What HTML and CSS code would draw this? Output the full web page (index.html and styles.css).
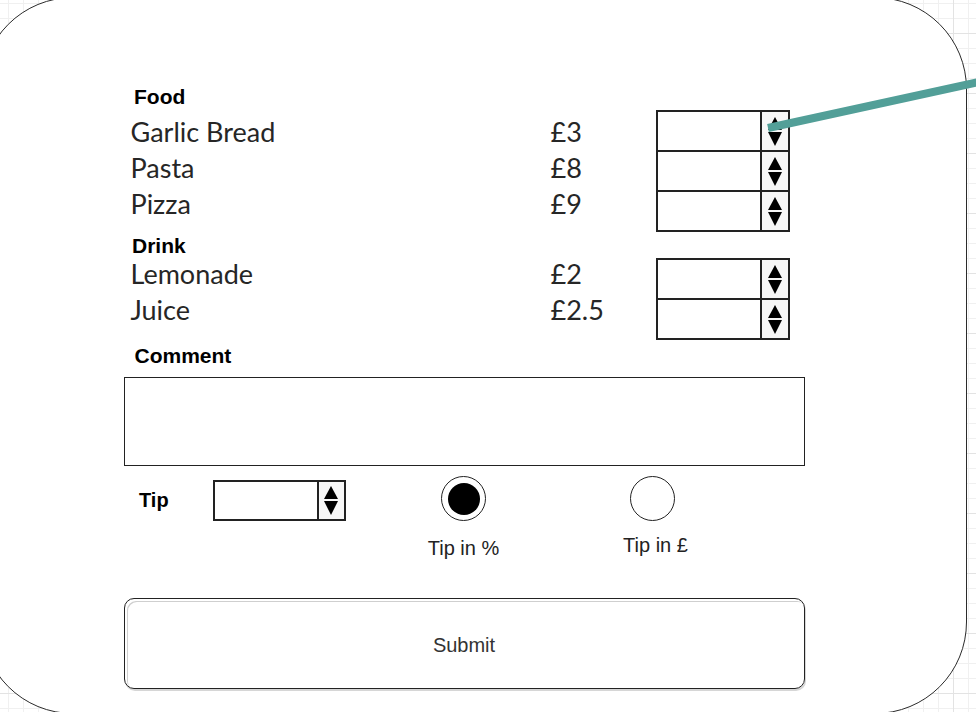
FILE: index.html
```html
<!DOCTYPE html>
<html lang="en">
<head>
    <meta charset="UTF-8">
    <meta name="viewport" content="width=device-width, initial-scale=1.0">
    <title>Order Form</title>
    <link rel="stylesheet" href="styles.css">
</head>
<body>
    <div class="frame">
        <form class="order">
            <section class="menu-section food">
                <div class="menu-list">
                    <h2 class="group-title">Food</h2>
                    <div class="item"><span>Garlic Bread</span><span>£3</span></div>
                    <div class="item"><span>Pasta</span><span>£8</span></div>
                    <div class="item"><span>Pizza</span><span>£9</span></div>
                </div>
                <div class="qty-stack">
                    <div class="spinner"><span class="spin-field"></span><span class="spin-arrows"></span></div>
                    <div class="spinner"><span class="spin-field"></span><span class="spin-arrows"></span></div>
                    <div class="spinner"><span class="spin-field"></span><span class="spin-arrows"></span></div>
                </div>
            </section>

            <section class="menu-section drink">
                <div class="menu-list">
                    <h2 class="group-title">Drink</h2>
                    <div class="item"><span>Lemonade</span><span>£2</span></div>
                    <div class="item"><span>Juice</span><span>£2.5</span></div>
                </div>
                <div class="qty-stack">
                    <div class="spinner"><span class="spin-field"></span><span class="spin-arrows"></span></div>
                    <div class="spinner"><span class="spin-field"></span><span class="spin-arrows"></span></div>
                </div>
            </section>

            <h2 class="group-title comment-title">Comment</h2>
            <div class="comment-box"></div>

            <div class="tip-row">
                <span class="tip-label">Tip</span>
                <div class="spinner tip-spinner"><span class="spin-field"></span><span class="spin-arrows"></span></div>
                <div class="radio-option percent">
                    <span class="radio"><span class="radio-dot"></span></span>
                    <span class="radio-text">Tip in %</span>
                </div>
                <div class="radio-option pounds">
                    <span class="radio"></span>
                    <span class="radio-text">Tip in £</span>
                </div>
            </div>

            <div class="submit-button">Submit</div>
        </form>
    </div>

    <svg class="pointer-line" width="976" height="712" viewBox="0 0 976 712">
        <line x1="768" y1="128" x2="995" y2="78.5" stroke="#529f98" stroke-width="8"/>
    </svg>
</body>
</html>
```

FILE: styles.css
```css
html, body {
    margin: 0;
    padding: 0;
    height: 100%;
    overflow: hidden;
}

body {
    font-family: "Liberation Sans", Arial, sans-serif;
    color: #000;
    background-color: #fff;
    background-image:
        linear-gradient(#e3e3e3 1px, transparent 1px),
        linear-gradient(90deg, #e3e3e3 1px, transparent 1px),
        linear-gradient(#f0f0f0 1px, transparent 1px),
        linear-gradient(90deg, #f0f0f0 1px, transparent 1px);
    background-size: 60px 60px, 60px 60px, 15px 15px, 15px 15px;
    background-position: 0 33px, 53px 0, 0 3px, 8px 0;
}

.frame {
    box-sizing: border-box;
    width: 986px;
    height: 717px;
    margin: -3px 0 0 -19px;
    padding: 89px 0 0 141.5px;
    border: 1.5px solid #2b2b2b;
    border-radius: 92px;
    background-color: #fff;
}

.order {
    width: 681px;
}

/* menu groups */

.menu-section {
    display: flex;
}

.menu-list {
    width: 532px;
}

.group-title {
    margin: 0;
    font-size: 21px;
    line-height: 20px;
    font-weight: bold;
}

.food .group-title {
    padding-left: 10.5px;
    margin-bottom: 7px;
}

.drink {
    margin-top: 4px;
}

.drink .group-title {
    padding-left: 8.5px;
}

.item {
    display: grid;
    grid-template-columns: 420px auto;
    padding-left: 7px;
    height: 36px;
    font-family: Lato, "Open Sans", sans-serif;
    font-size: 27px;
    line-height: 36px;
    color: #262626;
}

.qty-stack {
    width: 134px;
    box-sizing: border-box;
    border: 2px solid #222;
}

.food .qty-stack {
    margin-top: 23px;
}

.drink .qty-stack {
    margin-top: 22px;
}

.qty-stack .spinner + .spinner {
    border-top: 2px solid #222;
}

/* spinner */

.spinner {
    display: flex;
    height: 38px;
}

.spin-field {
    width: 102px;
    background-color: #fff;
}

.spin-arrows {
    flex: 1;
    display: flex;
    flex-direction: column;
    align-items: center;
    justify-content: center;
    gap: 2px;
    border-left: 2px solid #222;
    background-color: #f7f7f7;
}

.spin-arrows::before {
    content: "";
    border-left: 7px solid transparent;
    border-right: 7px solid transparent;
    border-bottom: 13px solid #000;
}

.spin-arrows::after {
    content: "";
    border-left: 7px solid transparent;
    border-right: 7px solid transparent;
    border-top: 14px solid #000;
}

/* comment */

.comment-title {
    margin-top: 6px;
    padding-left: 11px;
}

.comment-box {
    box-sizing: border-box;
    height: 89px;
    margin-top: 11px;
    border: 1.5px solid #222;
}

/* tip */

.tip-row {
    display: flex;
    align-items: flex-start;
    margin-top: 10px;
}

.tip-label {
    box-sizing: border-box;
    width: 89px;
    padding-left: 15.5px;
    margin-top: 14px;
    font-size: 20px;
    line-height: 20px;
    font-weight: bold;
}

.tip-spinner {
    box-sizing: border-box;
    width: 133px;
    height: 41px;
    margin-top: 4px;
    border: 2px solid #222;
}

.tip-spinner .spin-arrows {
    width: 25px;
}

.radio-option {
    display: flex;
    flex-direction: column;
    align-items: center;
    width: 120px;
}

.radio-option.percent {
    margin-left: 58px;
}

.radio-option.pounds {
    margin-left: 69px;
}

.radio {
    box-sizing: border-box;
    width: 45px;
    height: 45px;
    border: 1.5px solid #222;
    border-radius: 50%;
    display: flex;
    align-items: center;
    justify-content: center;
    background-color: #fff;
}

.radio-dot {
    width: 32px;
    height: 32px;
    border-radius: 50%;
    background-color: #000;
}

.radio-text {
    margin-top: 15px;
    font-size: 20px;
    line-height: 24px;
    color: #222;
}

.pounds .radio-text {
    margin-top: 12px;
    padding-left: 6px;
}

/* submit */

.submit-button {
    box-sizing: border-box;
    height: 91px;
    margin-top: 38px;
    padding-top: 4px;
    border: 1.5px solid #222;
    border-radius: 10px;
    display: flex;
    align-items: center;
    justify-content: center;
    font-size: 20px;
    color: #333;
    box-shadow: inset 2px 2px 0 #fff, inset 3px 3px 0 #cfcfcf, 1px 2px 0 #d6d6d6;
}

.pointer-line {
    position: absolute;
    top: 0;
    left: 0;
    pointer-events: none;
}
```
